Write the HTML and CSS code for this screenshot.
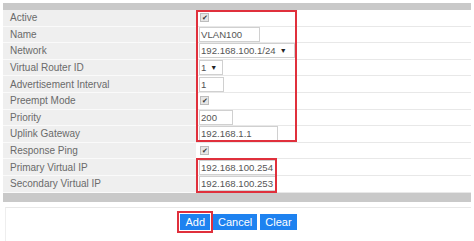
FILE: index.html
```html
<!DOCTYPE html>
<html lang="en">
  <head>
    <meta charset="utf-8" />
    <meta name="viewport" content="width=device-width, initial-scale=1" />
    <title>VRRP Add</title>
    <link rel="stylesheet" href="styles.css">
  </head>
  <body>
    <div class="panel">
      <div class="bar"></div>

      <div class="row">
        <div class="label">Active</div>
        <div class="value"><span class="check">&#10004;</span></div>
      </div>
      <div class="row">
        <div class="label">Name</div>
        <div class="value"><span class="field w-name">VLAN100</span></div>
      </div>
      <div class="row">
        <div class="label">Network</div>
        <div class="value"><span class="field select w-net">192.168.100.1/24 <i>&#9660;</i></span></div>
      </div>
      <div class="row">
        <div class="label">Virtual Router ID</div>
        <div class="value"><span class="field select w-id">1 <i>&#9660;</i></span></div>
      </div>
      <div class="row">
        <div class="label">Advertisement Interval</div>
        <div class="value"><span class="field w-adv">1</span></div>
      </div>
      <div class="row">
        <div class="label">Preempt Mode</div>
        <div class="value"><span class="check">&#10004;</span></div>
      </div>
      <div class="row">
        <div class="label">Priority</div>
        <div class="value"><span class="field w-pri">200</span></div>
      </div>
      <div class="row">
        <div class="label">Uplink Gateway</div>
        <div class="value"><span class="field w-gw">192.168.1.1</span></div>
      </div>
      <div class="row">
        <div class="label">Response Ping</div>
        <div class="value"><span class="check">&#10004;</span></div>
      </div>
      <div class="row">
        <div class="label">Primary Virtual IP</div>
        <div class="value"><span class="field w-vip">192.168.100.254</span></div>
      </div>
      <div class="row">
        <div class="label">Secondary Virtual IP</div>
        <div class="value"><span class="field w-vip">192.168.100.253</span></div>
      </div>

      <div class="bar bar-bottom"></div>

      <div class="mark mark-top"></div>
      <div class="mark mark-vip"></div>
    </div>

    <div class="actions">
      <button class="btn btn-add">Add</button>
      <button class="btn">Cancel</button>
      <button class="btn">Clear</button>
    </div>
  </body>
</html>
```

FILE: styles.css
```css
body {
  margin: 0;
  padding: 3px 0 0 3px;
  background-color: #ffffff;
  font-family: "Liberation Sans", Arial, sans-serif;
  font-size: 10px;
  color: #6a6a6a;
}

.panel {
  position: relative;
  width: 468px;
}

.bar {
  height: 7px;
  background-color: #c9c9c9;
}

.bar-bottom {
  height: 9px;
}

.row {
  display: flex;
  height: 16.6px;
}

.label {
  width: 186px;
  padding-left: 7px;
  background-color: #efefef;
  border-bottom: 1px solid #fafafa;
  display: flex;
  align-items: center;
}

.value {
  flex: 1;
  padding-left: 3px;
  background-color: #ffffff;
  border-bottom: 1px solid #e8e8e8;
  display: flex;
  align-items: center;
}

.field {
  box-sizing: border-box;
  height: 15px;
  padding: 0 1px;
  border: 1px solid #d0d0d0;
  background-color: #ffffff;
  color: #555555;
  font-size: 9.6px;
  display: flex;
  align-items: center;
  white-space: nowrap;
  overflow: hidden;
}

.select i {
  font-style: normal;
  font-size: 7px;
  color: #222222;
  margin-left: 4px;
}

.w-name { width: 61px; }
.w-net { width: 96px; }
.w-id { width: 24px; }
.w-adv { width: 25px; }
.w-pri { width: 34px; }
.w-gw { width: 79px; }
.w-vip { width: 77px; }

.check {
  box-sizing: border-box;
  width: 9px;
  height: 9px;
  margin-left: 1px;
  border: 1px solid #bdbdbd;
  background-color: #e6e6e6;
  color: #333333;
  font-size: 7px;
  line-height: 7px;
  text-align: center;
}

.mark {
  position: absolute;
  border: 2px solid #e0303c;
}

.mark-top {
  left: 193px;
  top: 7px;
  width: 97px;
  height: 128px;
}

.mark-vip {
  left: 193px;
  top: 155px;
  width: 77px;
  height: 31px;
}

.actions {
  margin: 5px 0 0 2px;
  width: 466px;
  height: 40px;
  border-top: 1px solid #e8e8e8;
  border-left: 1px solid #eeeeee;
  display: flex;
  justify-content: center;
  align-items: flex-start;
  gap: 3px;
  padding-top: 6px;
  box-sizing: border-box;
}

.btn {
  height: 16px;
  padding: 0 5px;
  border: 0;
  background-color: #1e82f0;
  color: #ffffff;
  font-family: "Liberation Sans", Arial, sans-serif;
  font-size: 11px;
}

.btn-add {
  outline: 2px solid #e0303c;
  outline-offset: 1px;
}
```
